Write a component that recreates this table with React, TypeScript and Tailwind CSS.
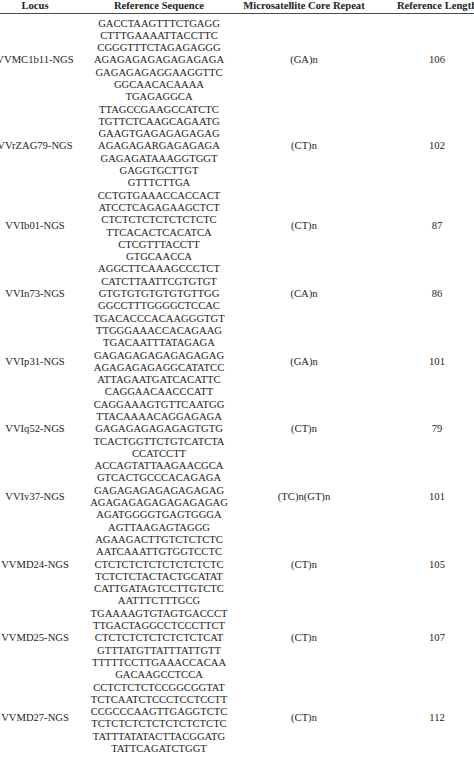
import React from "react";

type Row = {
  locus: string;
  seq: string[];
  repeat: string;
  length: number;
};

const rows: Row[] = [
  {
    locus: "VVMC1b11-NGS",
    seq: [
      "GACCTAAGTTTCTGAGG",
      "CTTTGAAAATTACCTTC",
      "CGGGTTTCTAGAGAGGG",
      "AGAGAGAGAGAGAGAGA",
      "GAGAGAGAGGAAGGTTC",
      "GGCAACACAAAA",
      "TGAGAGGCA",
    ],
    repeat: "(GA)n",
    length: 106,
  },
  {
    locus: "VVrZAG79-NGS",
    seq: [
      "TTAGCCGAAGCCATCTC",
      "TGTTCTCAAGCAGAATG",
      "GAAGTGAGAGAGAGAG",
      "AGAGAGARGAGAGAGA",
      "GAGAGATAAAGGTGGT",
      "GAGGTGCTTGT",
      "GTTTCTTGA",
    ],
    repeat: "(CT)n",
    length: 102,
  },
  {
    locus: "VVIb01-NGS",
    seq: [
      "CCTGTGAAACCACCACT",
      "ATCCTCAGAGAAGCTCT",
      "CTCTCTCTCTCTCTCTC",
      "TTCACACTCACATCA",
      "CTCGTTTACCTT",
      "GTGCAACCA",
    ],
    repeat: "(CT)n",
    length: 87,
  },
  {
    locus: "VVIn73-NGS",
    seq: [
      "AGGCTTCAAAGCCCTCT",
      "CATCTTAATTCGTGTGT",
      "GTGTGTGTGTGTGTTGG",
      "GGCCTTTGGGGCTCCAC",
      "TGACACCCACAAGGGTGT",
    ],
    repeat: "(CA)n",
    length: 86,
  },
  {
    locus: "VVIp31-NGS",
    seq: [
      "TTGGGAAACCACAGAAG",
      "TGACAATTTATAGAGA",
      "GAGAGAGAGAGAGAGAG",
      "AGAGAGAGAGGCATATCC",
      "ATTAGAATGATCACATTC",
      "CAGGAACAACCCATT",
    ],
    repeat: "(GA)n",
    length: 101,
  },
  {
    locus: "VVIq52-NGS",
    seq: [
      "CAGGAAAGTGTTCAATGG",
      "TTACAAAACAGGAGAGA",
      "GAGAGAGAGAGAGTGTG",
      "TCACTGGTTCTGTCATCTA",
      "CCATCCTT",
    ],
    repeat: "(CT)n",
    length: 79,
  },
  {
    locus: "VVIv37-NGS",
    seq: [
      "ACCAGTATTAAGAACGCA",
      "GTCACTGCCCACAGAGA",
      "GAGAGAGAGAGAGAGAG",
      "AGAGAGAGAGAGAGAGAG",
      "AGATGGGGTGAGTGGGA",
      "AGTTAAGAGTAGGG",
    ],
    repeat: "(TC)n(GT)n",
    length: 101,
  },
  {
    locus: "VVMD24-NGS",
    seq: [
      "AGAAGACTTGTCTCTCTC",
      "AATCAAATTGTGGTCCTC",
      "CTCTCTCTCTCTCTCTCTC",
      "TCTCTCTACTACTGCATAT",
      "CATTGATAGTCCTTGTCTC",
    ],
    repeat: "(CT)n",
    length: 105,
  },
  {
    locus: "VVMD25-NGS",
    seq: [
      "AATTTCTTTGCG",
      "TGAAAAGTGTAGTGACCCT",
      "TTGACTAGGCCTCCCTTCT",
      "CTCTCTCTCTCTCTCTCAT",
      "GTTTATGTTATTTATTGTT",
      "TTTTTCCTTGAAACCACAA",
      "GACAAGCCTCCA",
    ],
    repeat: "(CT)n",
    length: 107,
  },
  {
    locus: "VVMD27-NGS",
    seq: [
      "CCTCTCTCTCCGGCGGTAT",
      "TCTCAATCTCCCTCCTCCTT",
      "CCGCCCAAGTTGAGGTCTC",
      "TCTCTCTCTCTCTCTCTCTC",
      "TATTTATATACTTACGGATG",
      "TATTCAGATCTGGT",
    ],
    repeat: "(CT)n",
    length: 112,
  },
];

const cols = "grid grid-cols-[100px_148px_142px_124px]";

export default function App() {
  return (
    <div className="w-[474px] h-[757px] overflow-hidden bg-white text-[#1c1c1c] font-['Liberation_Serif','Times_New_Roman',serif]">
      {/* table is cropped on the left in the source image */}
      <div className="-ml-[15px] w-[514px]">
        <div className={`${cols} h-[14px] border-b border-[#4a4a4a] text-[10.6px] font-bold leading-[11px]`}>
          <div className="text-center">Locus</div>
          <div className="text-center">Reference Sequence</div>
          <div className="text-center">Microsatellite Core Repeat</div>
          <div className="text-center">Reference Length</div>
        </div>

        <div className="pt-[3.5px] text-[10.6px] leading-[12.3px]">
          {rows.map((r) => (
            <div key={r.locus} className={`${cols} items-center`}>
              <div className="text-center">{r.locus}</div>
              <div className="flex flex-col items-center">
                {r.seq.map((s, i) => (
                  <span key={i}>{s}</span>
                ))}
              </div>
              <div className="text-center">{r.repeat}</div>
              <div className="text-center">{r.length}</div>
            </div>
          ))}
        </div>
      </div>
    </div>
  );
}
